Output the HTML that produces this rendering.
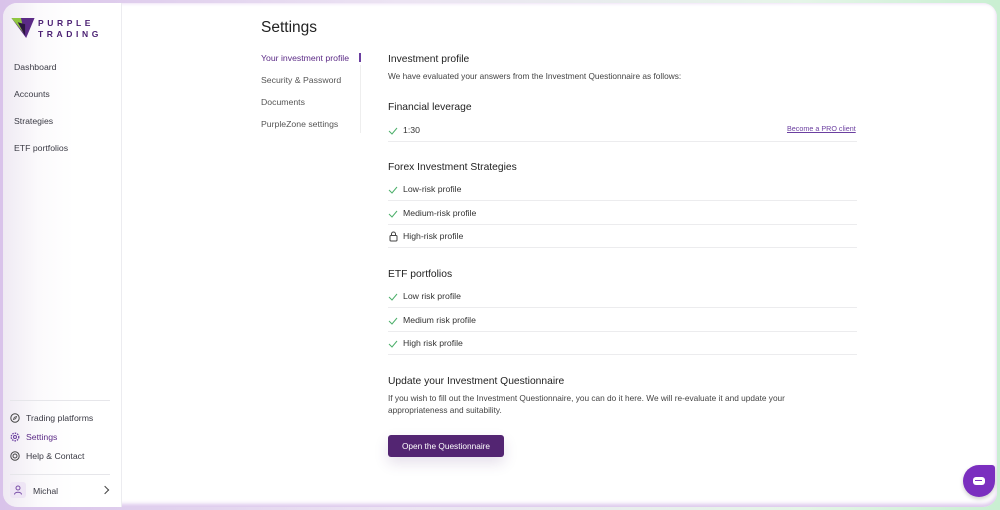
<!DOCTYPE html>
<html><head><meta charset="utf-8"><style>
*{margin:0;padding:0;box-sizing:border-box}
body{width:1000px;height:510px;overflow:hidden;font-family:"Liberation Sans",sans-serif;background:linear-gradient(90deg,#d9c3ea 0%,#ece4f3 40%,#e5f5e8 80%,#c9efd2 100%);position:relative}
.card{position:absolute;left:3px;top:3px;width:994px;height:504px;border-radius:14px;background:#fff;overflow:hidden;box-shadow:inset 0 -3px 4px #ddc9ec,inset 3px 0 4px #e6d6f1}
.side{position:absolute;left:0;top:0;width:119px;height:504px;border-right:1px solid #ececf0;background:linear-gradient(90deg,#efeaf3 0%,#fbfafc 30%,#fff 60%)}
.nav{position:absolute;left:11px;font-size:8.7px;color:#3a3a44}
.t{position:absolute;font-size:8.7px;color:#333}
.h{position:absolute;font-size:10.3px;color:#222}
.row{position:absolute;left:385px;width:469px;height:1px;background:#ececee}
.ck{position:absolute;width:10px;height:10px}
</style></head><body>
<div class="card">
<div class="side">
<svg style="position:absolute;left:8px;top:15px" width="24" height="21" viewBox="0 0 22 20"><polygon points="0,0 22,0 14,19" fill="#5b2a86"/><polygon points="0,0 9,0 13,16" fill="#8fc63f"/><polygon points="6,4 13,6 13,17" fill="#2a1540"/></svg>
<div style="position:absolute;left:35px;top:15px;font-size:8.5px;font-weight:bold;letter-spacing:3.6px;color:#4a1f72;line-height:11px">PURPLE<br>TRADING</div>
<div class="nav" style="top:59px">Dashboard</div>
<div class="nav" style="top:86px">Accounts</div>
<div class="nav" style="top:113px">Strategies</div>
<div class="nav" style="top:140px">ETF portfolios</div>
<div style="position:absolute;left:7px;top:397px;width:100px;height:1px;background:#e6e6ea"></div>
<svg style="position:absolute;left:7px;top:410px" width="10" height="10" viewBox="0 0 10 10"><circle cx="5" cy="5" r="4.2" fill="none" stroke="#444" stroke-width="1"/><path d="M3.5 6.5L4.3 4.3 6.5 3.5 5.7 5.7z" fill="none" stroke="#444" stroke-width=".8"/></svg>
<div class="nav" style="left:23px;top:410px">Trading platforms</div>
<svg style="position:absolute;left:7px;top:429px" width="10" height="10" viewBox="0 0 10 10"><circle cx="5" cy="5" r="3.8" fill="none" stroke="#6b3fa0" stroke-width="1.3" stroke-dasharray="1.5 1"/><circle cx="5" cy="5" r="1.5" fill="none" stroke="#6b3fa0" stroke-width="1"/></svg>
<div class="nav" style="left:23px;top:429px;color:#5b2a86">Settings</div>
<svg style="position:absolute;left:7px;top:448px" width="10" height="10" viewBox="0 0 10 10"><circle cx="5" cy="5" r="4.2" fill="none" stroke="#444" stroke-width="1"/><circle cx="5" cy="5" r="2" fill="none" stroke="#444" stroke-width="1"/></svg>
<div class="nav" style="left:23px;top:448px">Help &amp; Contact</div>
<div style="position:absolute;left:7px;top:471px;width:100px;height:1px;background:#e6e6ea"></div>
<div style="position:absolute;left:7px;top:479px;width:16px;height:16px;border-radius:3px;background:#eee5f5"></div>
<svg style="position:absolute;left:10px;top:482px" width="10" height="10" viewBox="0 0 10 10"><circle cx="5" cy="3" r="2" fill="none" stroke="#7a4fa8"/><path d="M1.5 9.5c0-3 7-3 7 0" fill="none" stroke="#7a4fa8"/></svg>
<div class="nav" style="left:30px;top:483px">Michal</div>
<div style="position:absolute;left:99px;top:484px;width:6px;height:6px;border-right:1.2px solid #444;border-top:1.2px solid #444;transform:rotate(45deg)"></div>
</div>
<div style="position:absolute;left:258px;top:16px;font-size:15.5px;color:#222">Settings</div>
<div class="t" style="left:258px;top:50px;color:#5b2a86">Your investment profile</div>
<div style="position:absolute;left:356px;top:50px;width:2px;height:9px;background:#6b3fa0"></div>
<div style="position:absolute;left:357px;top:62px;width:1px;height:68px;background:#eee"></div>
<div class="t" style="left:258px;top:72px;color:#555">Security &amp; Password</div>
<div class="t" style="left:258px;top:94px;color:#555">Documents</div>
<div class="t" style="left:258px;top:116px;color:#555">PurpleZone settings</div>

<div class="h" style="left:385px;top:51px">Investment profile</div>
<div class="t" style="left:385px;top:68px;font-size:8.3px;color:#444">We have evaluated your answers from the Investment Questionnaire as follows:</div>
<div class="h" style="left:385px;top:99px">Financial leverage</div>
<div class="t" style="left:400px;top:122px">1:30</div>
<div class="t" style="left:784px;top:121px;font-size:7.2px;color:#6b3fa0;text-decoration:underline">Become a PRO client</div>
<div class="row" style="top:138px"></div>
<div class="h" style="left:385px;top:159px">Forex Investment Strategies</div>
<div class="t" style="left:400px;top:181px">Low-risk profile</div>
<div class="row" style="top:197px"></div>
<div class="t" style="left:400px;top:205px">Medium-risk profile</div>
<div class="row" style="top:221px"></div>
<svg style="position:absolute;left:386px;top:228px" width="9" height="11" viewBox="0 0 9 11"><rect x="1" y="4.5" width="7" height="5.5" rx="1" fill="none" stroke="#444"/><path d="M2.5 4.5V3a2 2 0 0 1 4 0v1.5" fill="none" stroke="#444"/></svg>
<div class="t" style="left:400px;top:228px">High-risk profile</div>
<div class="row" style="top:244px"></div>
<div class="h" style="left:385px;top:266px">ETF portfolios</div>
<div class="t" style="left:400px;top:288px">Low risk profile</div>
<div class="row" style="top:304px"></div>
<div class="t" style="left:400px;top:312px">Medium risk profile</div>
<div class="row" style="top:328px"></div>
<div class="t" style="left:400px;top:335px">High risk profile</div>
<div class="row" style="top:351px"></div>
<svg class="ck" style="left:385px;top:123px" viewBox="0 0 10 10"><path d="M1 5l3 3 5-6" fill="none" stroke="#4caf6a" stroke-width="1"/></svg>
<svg class="ck" style="left:385px;top:182px" viewBox="0 0 10 10"><path d="M1 5l3 3 5-6" fill="none" stroke="#4caf6a" stroke-width="1"/></svg>
<svg class="ck" style="left:385px;top:206px" viewBox="0 0 10 10"><path d="M1 5l3 3 5-6" fill="none" stroke="#4caf6a" stroke-width="1"/></svg>
<svg class="ck" style="left:385px;top:289px" viewBox="0 0 10 10"><path d="M1 5l3 3 5-6" fill="none" stroke="#4caf6a" stroke-width="1"/></svg>
<svg class="ck" style="left:385px;top:313px" viewBox="0 0 10 10"><path d="M1 5l3 3 5-6" fill="none" stroke="#4caf6a" stroke-width="1"/></svg>
<svg class="ck" style="left:385px;top:336px" viewBox="0 0 10 10"><path d="M1 5l3 3 5-6" fill="none" stroke="#4caf6a" stroke-width="1"/></svg>
<div class="h" style="left:385px;top:373px">Update your Investment Questionnaire</div>
<div class="t" style="left:385px;top:389px;font-size:8.3px;line-height:12px;color:#444;width:440px">If you wish to fill out the Investment Questionnaire, you can do it here. We will re-evaluate it and update your appropriateness and suitability.</div>
<div style="position:absolute;left:385px;top:432px;width:116px;height:22px;border-radius:3px;background:#532572;color:#fff;font-size:8.3px;text-align:center;line-height:22px;box-shadow:0 6px 14px rgba(83,37,114,.15)">Open the Questionnaire</div>
<div style="position:absolute;left:960px;top:462px;width:32px;height:32px;border-radius:16px 3px 16px 16px;background:#7b2fbf;box-shadow:0 2px 4px rgba(0,0,0,.2)"></div>
<div style="position:absolute;left:970px;top:474px;width:12px;height:8px;border-radius:3px;background:#fff"></div>
<div style="position:absolute;left:972px;top:477px;width:7px;height:1px;background:#7b2fbf"></div>
</div>
</body></html>
